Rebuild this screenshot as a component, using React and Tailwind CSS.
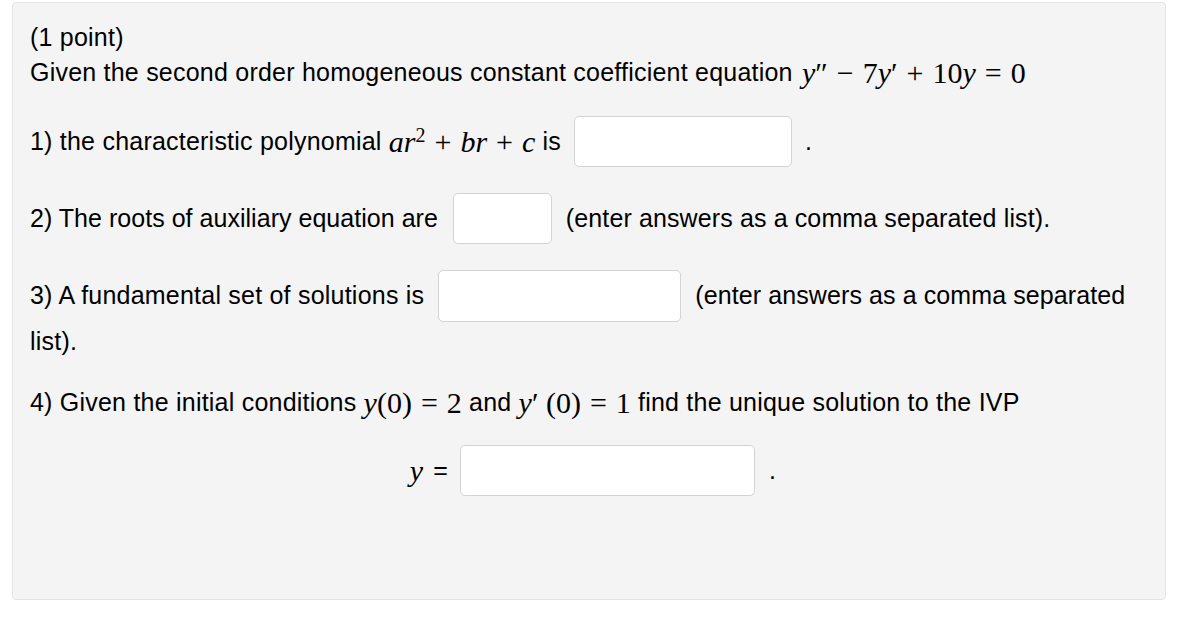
import React from 'react'

// WeBWorK-style question panel

const sans = "font-['Liberation_Sans',Arial,sans-serif]"
const serif = "font-['Liberation_Serif','Times_New_Roman',serif]"

function V({ children }) {
  return <span className="italic">{children}</span>
}

function Op({ children, rel = false }) {
  return <span className={rel ? 'mx-[9px]' : 'mx-[9px]'}>{children}</span>
}

function Math({ children, className = '' }) {
  return (
    <span className={`${serif} text-[30px] leading-none tracking-normal whitespace-nowrap ${className}`}>
      {children}
    </span>
  )
}

function AnswerBox({ width }) {
  return (
    <input
      type="text"
      className={`${width} h-full rounded-[5px] border border-[#d3d3d3] bg-white outline-none`}
    />
  )
}

export default function App() {
  return (
    <div className={`min-h-[620px] bg-white text-[25px] tracking-[0.22px] text-black ${sans}`}>
      <div className="ml-[12px] mt-[2px] h-[598px] w-[1154px] rounded-[4px] border border-[#e4e4e4] bg-[#f4f4f4] pl-[17px] pt-[19px]">
        <div className="flex flex-col">
          <div className="flex h-[32px] items-center">(1 point)</div>

          <div className="mt-[3px] flex h-[32px] items-center whitespace-pre">
            <span>Given the second order homogeneous constant coefficient equation </span>
            <Math className="ml-[2px]">
              <V>y</V>″<Op>−</Op>7<V>y</V>′<Op>+</Op>10<V>y</V>
              <Op rel>=</Op>0
            </Math>
          </div>

          <div className="mt-[27px] flex h-[51px] items-center whitespace-pre">
            <span>1) the characteristic polynomial </span>
            <Math>
              <V>ar</V>
              <sup className="text-[20px]">2</sup>
              <Op>+</Op>
              <V>br</V>
              <Op>+</Op>
              <V>c</V>
            </Math>
            <span> is</span>
            <span className="ml-[13px] h-full">
              <AnswerBox width="w-[218px]" />
            </span>
            <span className="ml-[13px]">.</span>
          </div>

          <div className="mt-[26px] flex h-[51px] items-center whitespace-pre">
            <span className="tracking-[0.03px]">2) The roots of auxiliary equation are</span>
            <span className="ml-[15px] h-full">
              <AnswerBox width="w-[99px]" />
            </span>
            <span className="ml-[14px] tracking-[0.12px]">(enter answers as a comma separated list).</span>
          </div>

          <div className="mt-[26px] flex h-[52px] items-center whitespace-pre">
            <span>3) A fundamental set of solutions is</span>
            <span className="ml-[14px] h-full">
              <AnswerBox width="w-[243px]" />
            </span>
            <span className="ml-[14px] tracking-[0.1px]">(enter answers as a comma separated</span>
          </div>
          <div className="mt-[4px] flex h-[32px] items-center">list).</div>

          <div className="mt-[29px] flex h-[32px] items-center whitespace-pre">
            <span>4) Given the initial conditions </span>
            <Math>
              <V>y</V>(0)<Op rel>=</Op>2
            </Math>
            <span> and </span>
            <Math>
              <V>y</V>′ (0)<Op rel>=</Op>1
            </Math>
            <span> find the unique solution to the IVP</span>
          </div>

          <div className="mt-[26px] flex h-[51px] items-center justify-center pr-[9px]">
            <Math>
              <V>y</V>
            </Math>
            <span className="ml-[10px]">=</span>
            <span className="ml-[12px] h-full">
              <AnswerBox width="w-[295px]" />
            </span>
            <span className="ml-[14px]">.</span>
          </div>
        </div>
      </div>
    </div>
  )
}
